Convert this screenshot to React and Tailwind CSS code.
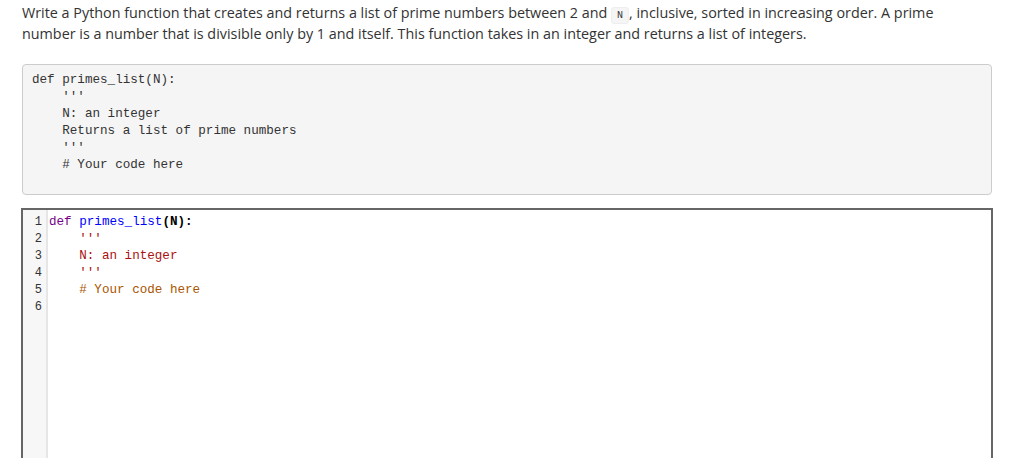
export default function App() {
  const mono = { fontFamily: '"Liberation Mono", "Courier New", monospace' };
  return (
    <div className="w-[1024px] h-[458px] overflow-hidden bg-white">
      <div className="pl-[22px]">
        <p
          className="w-[935px] pt-[3px] text-[14.35px] leading-[20px] text-[#333]"
          style={{ fontFamily: '"Open Sans", sans-serif' }}
        >
          Write a Python function that creates and returns a list of prime numbers between 2 and{" "}
          <code
            className="inline-block px-[5px] py-[1px] text-[10px] leading-[13px] rounded-[3px] bg-[#f5f5f5] border border-[#eee] text-[#333]"
            style={mono}
          >
            N
          </code>
          , inclusive, sorted in increasing order. A prime number is a number that is divisible only by 1 and itself. This function takes in an integer and returns a list of integers.
        </p>
        <pre
          className="mt-[20px] w-[970px] h-[131px] bg-[#f5f5f5] border border-[#ccc] rounded-[4px] pl-[9px] pt-[7px] text-[12.6px] leading-[17px] text-[#333]"
          style={mono}
        >
{`def primes_list(N):
    '''
    N: an integer
    Returns a list of prime numbers
    '''
    # Your code here`}
        </pre>
      </div>
      <div className="ml-[21px] mt-[13px] w-[972px] h-[260px] border-[2px] border-b-0 border-[#666] flex">
        <div
          className="w-[25px] bg-[#f7f7f7] border-r-[2px] border-[#e6e6e6] pt-[4px] text-right pr-[4px] text-[12px] leading-[17px] text-[#333]"
          style={mono}
        >
          {[1, 2, 3, 4, 5, 6].map((n) => (
            <div key={n}>{n}</div>
          ))}
        </div>
        <pre className="pl-[1px] pt-[4px] text-[12.6px] leading-[17px] text-black" style={mono}>
          <div>
            <span className="text-[#770088]">def</span>{" "}
            <span className="text-[#0000ff]">primes_list</span>
            <span className="font-bold">(N):</span>
          </div>
          <div className="text-[#aa1111]">{"    '''"}</div>
          <div className="text-[#aa1111]">{"    N: an integer"}</div>
          <div className="text-[#aa1111]">{"    '''"}</div>
          <div className="text-[#aa5500]">{"    # Your code here"}</div>
          <div>{" "}</div>
        </pre>
      </div>
    </div>
  );
}
